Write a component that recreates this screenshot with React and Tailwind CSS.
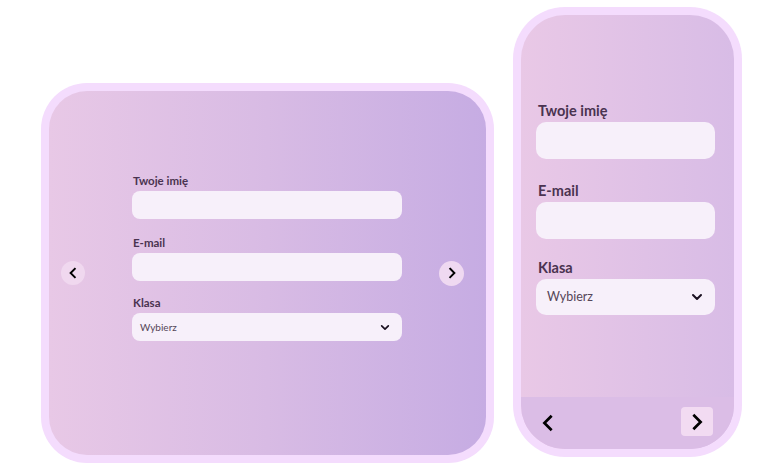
const Chevron = ({ dir = 'right', className = '', strokeWidth = 3 }) => (
  <svg className={className} viewBox="0 0 12 20" fill="none" stroke="currentColor" strokeWidth={strokeWidth} strokeLinecap="square" strokeLinejoin="miter">
    {dir === 'right' ? <path d="M3 3l7 7-7 7" /> : <path d="M9 3l-7 7 7 7" />}
  </svg>
);

const ChevronDown = ({ className = '' }) => (
  <svg className={className} viewBox="0 0 12 8" fill="none" stroke="currentColor" strokeWidth={2} strokeLinecap="round" strokeLinejoin="round">
    <path d="M2 2l4 4 4-4" />
  </svg>
);

const font = { fontFamily: 'Lato, "Noto Sans", sans-serif' };

const TabletForm = () => (
  <div className="w-[270px] ml-[47px] self-start mt-[82px] flex flex-col">
    <label className="text-[11.5px] leading-[15px] font-bold text-[#4a3350] pl-[1px]">Twoje imię</label>
    <div className="mt-[3px] h-[28px] rounded-[8px] bg-[#f7f0fa]" />
    <label className="mt-[16px] text-[11.5px] leading-[15px] font-bold text-[#4a3350] pl-[1px]">E-mail</label>
    <div className="mt-[3px] h-[28px] rounded-[8px] bg-[#f7f0fa]" />
    <label className="mt-[14px] text-[11.5px] leading-[15px] font-bold text-[#4a3350] pl-[1px]">Klasa</label>
    <div className="mt-[3px] h-[28px] rounded-[8px] bg-[#f7f0fa] flex items-center justify-between pl-[8px] pr-[12px]">
      <span className="text-[10px] text-[#554658]">Wybierz</span>
      <ChevronDown className="w-[10px] h-[7px] text-[#1a1020]" />
    </div>
  </div>
);

const PhoneForm = () => (
  <div className="pl-[15px] pt-[86px] flex flex-col w-[194px]">
    <label className="text-[14.5px] leading-[19px] font-bold text-[#4a3350] pl-[2px]">Twoje imię</label>
    <div className="mt-[2px] h-[37px] rounded-[10px] bg-[#f7f0fa]" />
    <label className="mt-[22px] text-[14.5px] leading-[19px] font-bold text-[#4a3350] pl-[2px]">E-mail</label>
    <div className="mt-[2px] h-[37px] rounded-[10px] bg-[#f7f0fa]" />
    <label className="mt-[19px] text-[14.5px] leading-[19px] font-bold text-[#4a3350] pl-[2px]">Klasa</label>
    <div className="mt-[2px] h-[36px] rounded-[10px] bg-[#f7f0fa] flex items-center justify-between pl-[11px] pr-[12px]">
      <span className="text-[12.5px] text-[#554658]">Wybierz</span>
      <ChevronDown className="w-[12px] h-[8px] text-[#1a1020]" />
    </div>
  </div>
);

export default function App() {
  return (
    <div className="w-[768px] h-[468px] bg-white flex items-start pl-[41px] overflow-hidden" style={font}>
      {/* Tablet */}
      <div className="mt-[83px] w-[453px] h-[380px] rounded-[46px] bg-[#f4dcfd] p-[8px]">
        <div className="h-full rounded-[38px] bg-gradient-to-r from-[#e8c8e6] via-[#d8bbe4] to-[#c6ace3] flex items-center">
          <button className="ml-[12px] w-[24px] h-[24px] rounded-full bg-[#f0d8ef] flex items-center justify-center text-black">
            <Chevron dir="left" className="w-[8px] h-[12px]" strokeWidth={3.2} />
          </button>
          <TabletForm />
          <button className="ml-[37px] w-[25px] h-[25px] rounded-full bg-[#efd9f1] flex items-center justify-center text-black">
            <Chevron dir="right" className="w-[8px] h-[12px]" strokeWidth={3.2} />
          </button>
        </div>
      </div>

      {/* Phone */}
      <div className="ml-[19px] mt-[7px] w-[229px] h-[450px] rounded-[52px] bg-[#f4dcfd] p-[8px]">
        <div className="h-full rounded-[44px] overflow-hidden bg-gradient-to-r from-[#e9c8e6] to-[#d8bce6] flex flex-col">
          <PhoneForm />
          <div className="flex-1" />
          <div className="h-[52px] bg-[#dbbde6] flex items-center justify-between pl-[21px] pr-[21px]">
            <Chevron dir="left" className="w-[12px] h-[18px] text-black" strokeWidth={3} />
            <div className="w-[32px] h-[29px] rounded-[4px] bg-[#f2dbf2] flex items-center justify-center -mt-[3px]">
              <Chevron dir="right" className="w-[12px] h-[18px] text-black" strokeWidth={3} />
            </div>
          </div>
        </div>
      </div>
    </div>
  );
}
